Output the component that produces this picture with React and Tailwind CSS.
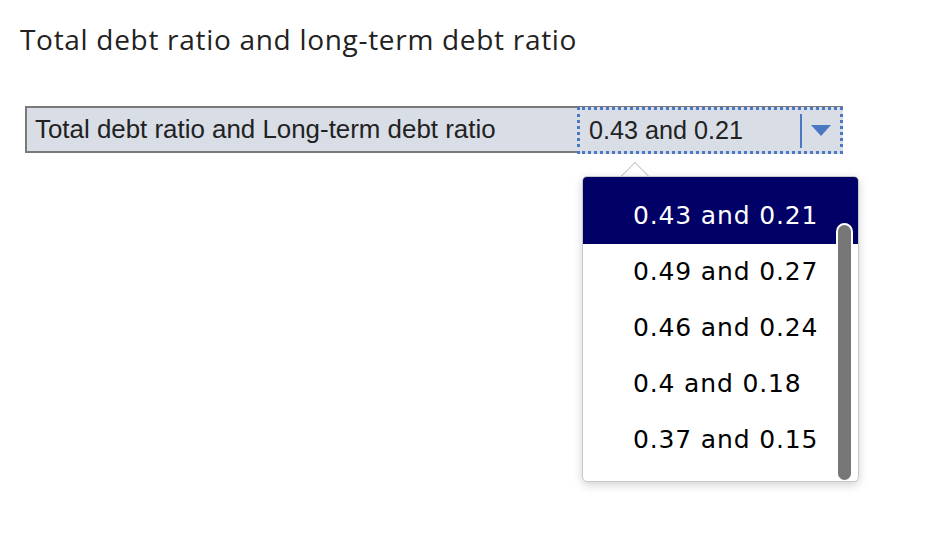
import React from 'react';

const options = ['0.43 and 0.21', '0.49 and 0.27', '0.46 and 0.24', '0.4 and 0.18', '0.37 and 0.15'];

export default function App() {
  return (
    <div className="w-[936px] h-[542px] bg-white relative">
      <h1 className="pl-[20px] pt-[21px] text-[28px] leading-[36px] text-[#222] font-['Open_Sans',sans-serif] font-normal tracking-[0.7px]">
        Total debt ratio and long-term debt ratio
      </h1>

      <div className="ml-[25px] mt-[49px] flex w-[818px] h-[47px] border-t-2 border-[#7a7a7a] font-['Liberation_Sans',Arial,sans-serif] text-[25.9px] text-[#222]">
        <div className="w-[552px] bg-[#d9dde6] border-l-2 border-b-2 border-[#7a7a7a] flex items-center pl-[8px]">
          Total debt ratio and Long-term debt ratio
        </div>
        <div className="relative flex-1 -mt-[1px]">
          <div className="h-[47px] bg-[#d9dde6] border-[3px] border-dotted border-[#4a78c2] flex items-center">
            <span className="flex-1 pl-[9px] text-[25.2px]">0.43 and 0.21</span>
            <span className="w-[2px] h-[34px] bg-[#4a78c2]" />
            <span className="w-[38px] flex justify-center">
              <svg width="20" height="11" viewBox="0 0 20 11">
                <path d="M0 0 H20 L10 11 Z" fill="#4a78c2" />
              </svg>
            </span>
          </div>

          <div className="absolute left-[5px] top-[69px] w-[277px] h-[306px] z-10">
            <div className="absolute left-[43px] -top-[10px] w-[20px] h-[20px] bg-white border-t border-l border-[#c8c8c8] rotate-45" />
            <div className="relative w-full h-full bg-white border border-[#c8c8c8] rounded-[5px] shadow-[0_3px_10px_rgba(0,0,0,0.18)] overflow-hidden font-['DejaVu_Sans',Verdana,sans-serif] text-[25px] tracking-[0.85px]">
              {options.map((o, i) => (
                <div
                  key={o}
                  className={
                    i === 0
                      ? 'h-[67px] pt-[10px] flex items-center pl-[50px] bg-[#000066] text-white'
                      : 'h-[56px] flex items-center pl-[50px] text-black'
                  }
                >
                  {o}
                </div>
              ))}
              <div className="absolute right-[5px] top-[46px] -bottom-[1px] w-[17px] rounded-full bg-[#777] border-2 border-white" />
            </div>
          </div>
        </div>
      </div>
    </div>
  );
}
